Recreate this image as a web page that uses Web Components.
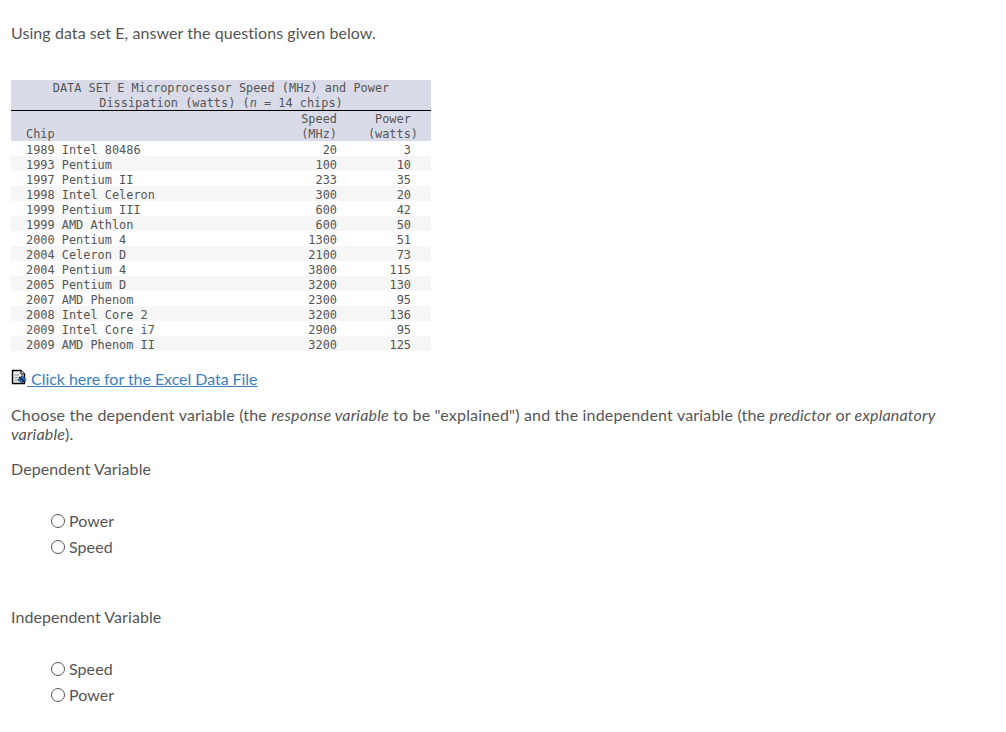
<!DOCTYPE html>
<html>
<head>
<meta charset="utf-8">
<title>Data set E</title>
<style>
  html, body { margin: 0; background: #fff; }
  body { font-family: "Lato", "Liberation Sans", sans-serif; color: #555; }
</style>
</head>
<body>
<question-page>
  <span slot="intro">Using data set E, answer the questions given below.</span>
  <data-table></data-table>
  <excel-link slot="link">Click here for the Excel Data File</excel-link>
  <span slot="prompt">Choose the dependent variable (the <i>response variable</i> to be "explained") and the independent variable (the <i>predictor</i> or <i>explanatory variable</i>).</span>
  <radio-group slot="dependent" label="Dependent Variable" name="dep" options="Power,Speed"></radio-group>
  <radio-group slot="independent" label="Independent Variable" name="ind" options="Speed,Power"></radio-group>
</question-page>

<script>
(function() {
    const TEXT_STYLE = 'font-size: 16px; line-height: 19px; letter-spacing: .07px; color: #555;';

    class QuestionPage extends HTMLElement {
        constructor() {
            super();
            this.attachShadow({ mode: 'open' });
            this.shadowRoot.innerHTML = `
                <style>
                    :host { display: block; padding: 23px 11px 0 11px; width: 930px; ${TEXT_STYLE} }
                    .intro { margin-bottom: 38px; }
                    .link { margin-top: 18px; letter-spacing: -.05px; }
                    .prompt { margin-top: 17px; letter-spacing: .18px; }
                    .group { display: block; margin-top: 16px; }
                    .group + .group { margin-top: 51px; }
                </style>
                <div class="intro"><slot name="intro"></slot></div>
                <slot></slot>
                <div class="link"><slot name="link"></slot></div>
                <div class="prompt"><slot name="prompt"></slot></div>
                <div class="group"><slot name="dependent"></slot></div>
                <div class="group"><slot name="independent"></slot></div>
            `;
        }
    }

    const ROWS = [
        ['1989 Intel 80486', 20, 3],
        ['1993 Pentium', 100, 10],
        ['1997 Pentium II', 233, 35],
        ['1998 Intel Celeron', 300, 20],
        ['1999 Pentium III', 600, 42],
        ['1999 AMD Athlon', 600, 50],
        ['2000 Pentium 4', 1300, 51],
        ['2004 Celeron D', 2100, 73],
        ['2004 Pentium 4', 3800, 115],
        ['2005 Pentium D', 3200, 130],
        ['2007 AMD Phenom', 2300, 95],
        ['2008 Intel Core 2', 3200, 136],
        ['2009 Intel Core i7', 2900, 95],
        ['2009 AMD Phenom II', 3200, 125]
    ];

    class DataTable extends HTMLElement {
        constructor() {
            super();
            this.attachShadow({ mode: 'open' });
            const rows = ROWS.map(r => `
                <div class="row">
                    <span>${r[0]}</span><span class="num">${r[1]}</span><span class="num pw">${r[2]}</span>
                </div>`).join('');
            this.shadowRoot.innerHTML = `
                <style>
                    :host { display: block; width: 420px; font-family: "DejaVu Sans Mono", "Liberation Mono", monospace; font-size: 11.9px; line-height: 15px; letter-spacing: 0; color: #555; }
                    .title { box-sizing: border-box; background: #d9dce8; text-align: center; height: 31px; border-bottom: 1px solid #000; padding: 1px 40px 0; }
                    .row, .head { box-sizing: border-box; display: grid; grid-template-columns: 1fr 80px 81px; padding: 1px 13px 0 15px; }
                    .head { background: #d9dce8; height: 30px; align-items: start; }
                    .head .chip { margin-top: 15px; }
                    .head .sp { text-align: right; }
                    .head .pw { text-align: center; justify-self: end; }
                    .row { height: 15px; padding-top: 2px; }
                    .row:nth-child(even) { background: #f6f6f6; }
                    .num { text-align: right; }
                    .num.pw { padding-right: 7px; }
                </style>
                <div class="title">DATA SET E Microprocessor Speed (MHz) and Power Dissipation (watts) (<i>n</i> = 14 chips)</div>
                <div class="head">
                    <span class="chip">Chip</span><span class="sp">Speed<br>(MHz)</span><span class="pw">Power<br>(watts)</span>
                </div>
                <div class="body">${rows}</div>
            `;
        }
    }

    class ExcelLink extends HTMLElement {
        constructor() {
            super();
            this.attachShadow({ mode: 'open' });
            this.shadowRoot.innerHTML = `
                <style>
                    :host { display: block; }
                    .wrap { display: flex; align-items: center; }
                    svg { display: block; flex: none; margin-top: -3px; }
                    a { color: #3a80bd; text-decoration: underline; }
                </style>
                <div class="wrap">
                    <svg width="16" height="16" viewBox="0 0 16 16">
                        <path d="M1.5 1.5H10L13.5 5V14.5H1.5Z" fill="#e8e8e8" stroke="#000" stroke-width="1.4"/>
                        <path d="M10 1.5V5H13.5" fill="#fff" stroke="#000"/>
                        <path d="M3.5 6H8M3.5 8.5H7M3.5 11H8" stroke="#999"/>
                        <path d="M7 11L11 6.5L15 10.5L11.5 14Z" fill="#1f78c8" stroke="#123a60" stroke-width=".8"/>
                        <path d="M8 8L14 13" stroke="#111" stroke-width="1.2"/>
                    </svg>
                    <a href="#">&nbsp;<slot></slot></a>
                </div>
            `;
        }
    }

    class RadioGroup extends HTMLElement {
        constructor() {
            super();
            this.attachShadow({ mode: 'open' });
        }

        connectedCallback() {
            const label = this.getAttribute('label');
            const options = (this.getAttribute('options') || '').split(',');
            const items = options.map(o => `
                <div class="opt"><span class="dot"></span><span>${o}</span></div>`).join('');
            this.shadowRoot.innerHTML = `
                <style>
                    :host { display: block; }
                    .list { margin-top: 33px; padding-left: 40px; display: flex; flex-direction: column; gap: 7px; }
                    .opt { display: flex; align-items: center; gap: 4px; }
                    .dot { width: 12px; height: 12px; border: 1px solid #555; border-radius: 50%; background: #fff; flex: none; }
                </style>
                <div>${label}</div>
                <div class="list">${items}</div>
            `;
        }
    }

    customElements.define('question-page', QuestionPage);
    customElements.define('data-table', DataTable);
    customElements.define('excel-link', ExcelLink);
    customElements.define('radio-group', RadioGroup);
})();
</script>
</body>
</html>
